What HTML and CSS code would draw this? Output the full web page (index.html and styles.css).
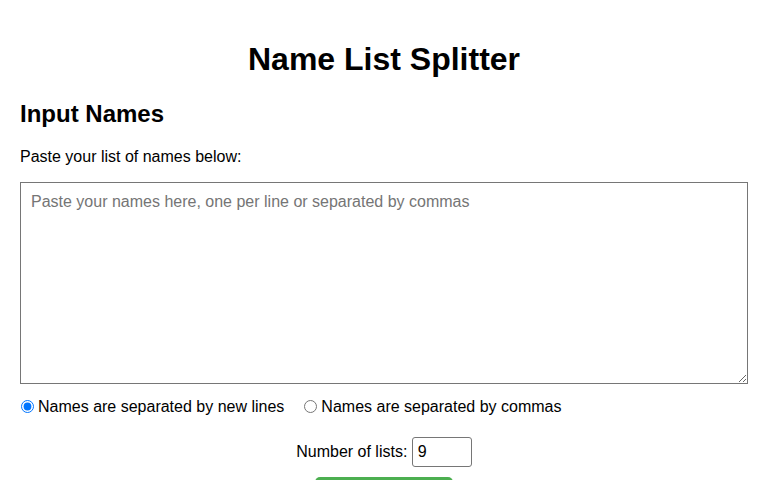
FILE: index.html
```html
<!DOCTYPE html>
<html lang="en">
<head>
<meta charset="utf-8">
<title>Name List Splitter</title>
<link rel="stylesheet" href="styles.css">
</head>
<body>
<h1 class="title">Name List Splitter</h1>
<section class="input-section">
  <h2 class="section-title">Input Names</h2>
  <p class="hint">Paste your list of names below:</p>
  <div class="textarea-wrap">
    <textarea class="names" placeholder="Paste your names here, one per line or separated by commas"></textarea>
  </div>
  <div class="radio-group">
    <label class="radio-label"><input type="radio" name="sep" checked>Names are separated by new lines</label>
    <label class="radio-label"><input type="radio" name="sep">Names are separated by commas</label>
  </div>
  <div class="count-row">
    <label class="count-label">Number of lists: <input class="count-input" type="number" value="9" min="1"></label>
  </div>
  <div class="actions">
    <button class="split-btn">Split Names</button>
  </div>
</section>
</body>
</html>
```
FILE: styles.css
```css
html, body {
  margin: 0;
}
body {
  padding: 20px;
  font-family: "Liberation Sans", Arial, sans-serif;
  font-size: 16px;
  color: #000;
  background: #fff;
}
.title {
  text-align: center;
  font-size: 32px;
  margin: 21.44px 0;
}
.section-title {
  font-size: 24px;
  margin: 19.92px 0;
}
.hint {
  margin: 16px 0;
}
.textarea-wrap {
  line-height: 0;
}
.names {
  display: block;
  width: 100%;
  height: 202px;
  box-sizing: border-box;
  padding: 10px;
  font-family: "Liberation Sans", Arial, sans-serif;
  font-size: 16px;
  border: 1px solid #767676;
  margin: 0;
}
.names::placeholder {
  color: #757575;
}
.radio-group {
  margin-top: 14px;
  display: flex;
  gap: 19px;
}
.radio-label input {
  margin: 0 4px 0 1px;
  vertical-align: -1px;
}
.count-row {
  text-align: center;
  margin-top: 21px;
}
.count-input {
  width: 60px;
  height: 30px;
  box-sizing: border-box;
  padding: 5px;
  font-family: "Liberation Sans", Arial, sans-serif;
  font-size: 16px;
  border: 1px solid #767676;
  border-radius: 3px;
  margin: 0;
}
.actions {
  text-align: center;
  margin-top: 10px;
}
.split-btn {
  background: #4caf50;
  color: #fff;
  border: none;
  border-radius: 5px;
  padding: 10px 20px;
  width: 138px;
  font-family: "Liberation Sans", Arial, sans-serif;
  font-size: 16px;
}
```
